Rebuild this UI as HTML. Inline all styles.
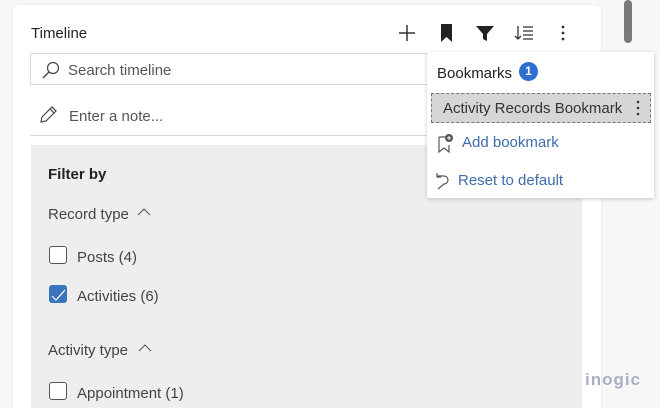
<!DOCTYPE html>
<html style="height:408px;overflow:hidden"><head><style>
*{margin:0;padding:0;box-sizing:border-box}
body{width:660px;height:408px;background:#f7f7f7;font-family:"Liberation Sans",sans-serif;position:relative;overflow:hidden;color:#242424}
.card{position:absolute;left:13px;top:5px;width:588px;height:420px;background:#fff;border-radius:6px;box-shadow:0 0 2px rgba(0,0,0,.12)}
.a{position:absolute}
.scroll{left:624px;top:0;width:8px;height:43px;background:#7a7a7a;border-radius:4px}
.search{left:30px;top:53px;width:420px;height:32px;border:1px solid #d8d8d8;border-right:none}
.note{left:30px;top:135px;width:420px;height:1px;background:#d8d8d8}
.panel{left:31px;top:145px;width:551px;height:270px;background:#eeeeee}
.t{font-size:15px;color:#444}
.cb{width:18px;height:18px;border:1px solid #555;border-radius:3px;background:#fff}
.dd{left:427px;top:52px;width:227px;height:146px;background:#fff;box-shadow:0 1px 4px rgba(0,0,0,.2)}
.sel{left:431px;top:93px;width:220px;height:30px;background:#d6d6d6;border:1px dashed #777}
.link{font-size:15px;color:#3d6cae}
</style></head><body>
<div class="card"></div>
<div class="a scroll"></div>
<div class="a" style="left:31px;top:25px;font-size:15px;color:#242424">Timeline</div>
<svg class="a" style="left:397px;top:23px" width="20" height="20"><path d="M10 2v16M2 10h16" stroke="#333" stroke-width="1.5"/></svg>
<svg class="a" style="left:439px;top:23px" width="16" height="20"><path d="M2 1h11v18l-5.5-5-5.5 5z" fill="#222"/></svg>
<svg class="a" style="left:475px;top:24px" width="20" height="18"><path d="M1 2h18l-7 8v7l-4-2v-5z" fill="#222"/></svg>
<svg class="a" style="left:514px;top:23px" width="20" height="20"><path d="M4 3v13M1 13l3 3 3-3" stroke="#333" stroke-width="1.3" fill="none"/><path d="M9 4h10M9 8h10M9 12h10M9 16h10" stroke="#333" stroke-width="1.2"/></svg>
<svg class="a" style="left:560px;top:24px" width="6" height="18"><circle cx="3" cy="3" r="1.4" fill="#333"/><circle cx="3" cy="9" r="1.4" fill="#333"/><circle cx="3" cy="15" r="1.4" fill="#333"/></svg>
<div class="a search"></div>
<svg class="a" style="left:41px;top:60px" width="20" height="20"><circle cx="12" cy="8" r="5.5" stroke="#444" stroke-width="1.2" fill="none"/><path d="M8 12l-6 6" stroke="#444" stroke-width="1.4"/></svg>
<div class="a t" style="left:68px;top:62px;color:#555">Search timeline</div>
<svg class="a" style="left:39px;top:104px" width="20" height="20"><path d="M2 18l1-5L13 3l4 4L7 17zM11 5l4 4" stroke="#444" stroke-width="1.2" fill="none"/></svg>
<div class="a t" style="left:69px;top:108px;color:#555">Enter a note...</div>
<div class="a note"></div>
<div class="a panel"></div>
<div class="a" style="left:48px;top:166px;font-size:15px;font-weight:bold;color:#222">Filter by</div>
<div class="a t" style="left:48px;top:206px">Record type</div>
<svg class="a" style="left:136px;top:207px" width="16" height="10"><path d="M2 8l6-6 6 6" stroke="#555" stroke-width="1.1" fill="none"/></svg>
<div class="a cb" style="left:49px;top:246px"></div>
<div class="a t" style="left:77px;top:249px">Posts (4)</div>
<div class="a cb" style="left:49px;top:285px;background:#3a74be;border-color:#3a74be"></div>
<svg class="a" style="left:50px;top:287px" width="16" height="16"><path d="M2 9l4 4 9-10" stroke="#fff" stroke-width="1.2" fill="none"/></svg>
<div class="a t" style="left:77px;top:288px">Activities (6)</div>
<div class="a t" style="left:48px;top:342px">Activity type</div>
<svg class="a" style="left:137px;top:343px" width="16" height="10"><path d="M2 8l6-6 6 6" stroke="#555" stroke-width="1.1" fill="none"/></svg>
<div class="a cb" style="left:49px;top:382px"></div>
<div class="a t" style="left:77px;top:385px">Appointment (1)</div>
<div class="a" style="left:585px;top:370px;font-size:17px;font-weight:bold;color:#a8b0c6;letter-spacing:1px">inogic</div>
<div class="a dd"></div>
<div class="a" style="left:437px;top:65px;font-size:15px;color:#222">Bookmarks</div>
<div class="a" style="left:519px;top:62px;width:19px;height:19px;border-radius:50%;background:#2f6fd1;color:#fff;font-size:12px;font-weight:bold;text-align:center;line-height:19px">1</div>
<div class="a sel"></div>
<div class="a" style="left:443px;top:100px;font-size:15px;color:#333">Activity Records Bookmark</div>
<svg class="a" style="left:635px;top:99px" width="6" height="18"><circle cx="3" cy="3" r="1.3" fill="#333"/><circle cx="3" cy="9" r="1.3" fill="#333"/><circle cx="3" cy="15" r="1.3" fill="#333"/></svg>
<svg class="a" style="left:437px;top:133px" width="18" height="20"><path d="M2 4h7M2 4v15l5-4 5 4v-7" stroke="#555" stroke-width="1.2" fill="none"/><circle cx="12" cy="5" r="4" fill="#555"/><path d="M12 3v4M10 5h4" stroke="#fff" stroke-width="1"/></svg>
<div class="a link" style="left:462px;top:134px">Add bookmark</div>
<svg class="a" style="left:434px;top:172px" width="16" height="18"><path d="M3 4h7a4 4 0 010 8l-6 5M3 1v4h4" stroke="#555" stroke-width="1.2" fill="none"/></svg>
<div class="a link" style="left:458px;top:172px">Reset to default</div>
</body></html>
